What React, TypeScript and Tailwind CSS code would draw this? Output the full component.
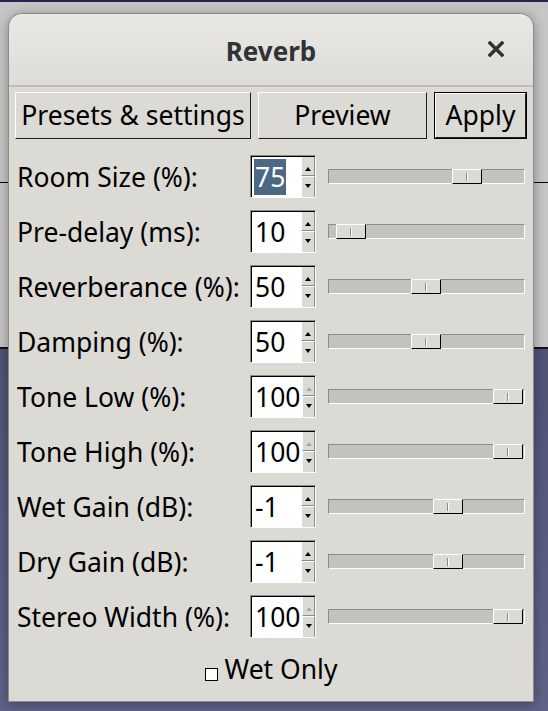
import React from 'react';

interface Param {
  label: string;
  value: number;
  min: number;
  max: number;
  selected?: boolean;
}

const params: Param[] = [
  { label: 'Room Size (%):', value: 75, min: 0, max: 100, selected: true },
  { label: 'Pre-delay (ms):', value: 10, min: 0, max: 200 },
  { label: 'Reverberance (%):', value: 50, min: 0, max: 100 },
  { label: 'Damping (%):', value: 50, min: 0, max: 100 },
  { label: 'Tone Low (%):', value: 100, min: 0, max: 100 },
  { label: 'Tone High (%):', value: 100, min: 0, max: 100 },
  { label: 'Wet Gain (dB):', value: -1, min: -20, max: 10 },
  { label: 'Dry Gain (dB):', value: -1, min: -20, max: 10 },
  { label: 'Stereo Width (%):', value: 100, min: 0, max: 100 },
];

const Arrow: React.FC<{ up?: boolean; disabled?: boolean }> = ({ up, disabled }) => (
  <svg width="6" height="4" viewBox="0 0 6 4" className="block">
    <polygon points={up ? '0,4 3,0 6,4' : '0,0 6,0 3,4'} fill={disabled ? '#a9a7a2' : '#000'} />
  </svg>
);

const SpinBox: React.FC<{ p: Param }> = ({ p }) => (
  <div className="w-[66px] h-[43px] flex border-t border-l border-[#8d8b86] border-b border-r border-b-white border-r-white">
    <div className="flex-1 flex items-center bg-white border-t border-l border-black pl-[2px] pr-[1px] py-[2px]">
      <span
        className={`h-full flex items-center px-[1px] pt-[1px] text-[26.5px] leading-none ${
          p.selected ? 'bg-[#4b6983] text-white' : 'text-black'
        }`}
      >
        {p.value}
      </span>
    </div>
    <div className="w-[14px] flex flex-col bg-[#dcdad5] border-t border-black">
      <div className="flex-1 flex items-end justify-center pb-[4px] border-l border-white border-r border-r-[#8d8b86] border-b border-b-[#8d8b86]">
        <Arrow up disabled={p.value >= p.max} />
      </div>
      <div className="flex-1 flex items-start justify-center pt-[7px] border-l border-white border-r border-r-[#8d8b86] border-t border-t-white">
        <Arrow disabled={p.value <= p.min} />
      </div>
    </div>
  </div>
);

const Slider: React.FC<{ p: Param }> = ({ p }) => {
  const frac = (p.value - p.min) / (p.max - p.min);
  return (
    <div className="relative w-[197px] h-[15px] bg-[#c4c2bc] border-t border-l border-[#8d8b86] border-b border-r border-b-white border-r-white">
      <div
        className="absolute -top-[1px] w-[30px] h-[15px] flex items-center justify-center bg-[#dcdad5] border-t border-l border-white border-b border-r border-b-black border-r-black"
        style={{ left: frac * 165 - 1 }}
      >
        <div className="w-[2px] h-[8px] border-l border-[#8d8b86] border-r border-r-white" />
      </div>
    </div>
  );
};

const bevel =
  'h-[47px] flex items-center justify-center bg-[#dcdad5] text-black text-[26.5px] border-t border-l border-white border-b border-r border-b-[#1e1e1e] border-r-[#1e1e1e]';

export default function App() {
  return (
    <div className="relative w-[548px] h-[711px] overflow-hidden flex flex-col font-['Noto_Sans','DejaVu_Sans',sans-serif]">
      <div className="h-[2px] bg-[#25254f]" />
      <div className="h-[180px] bg-[#c6c6c6]" />
      <div className="h-[1px] bg-black" />
      <div className="h-[164px] bg-[#c6c6c6]" />
      <div className="h-[2px] bg-[#111111]" />
      <div className="flex-1 bg-gradient-to-b from-[#4f5376] to-[#5f6388]" />

      <div className="absolute left-[8px] top-[13px] w-[526px] h-[689px] flex flex-col bg-[#dcdad5] border border-[#8a8a88] rounded-t-[14px] shadow-[0_2px_12px_rgba(0,0,0,0.35)] overflow-hidden">
        <div className="h-[71px] grid grid-cols-[1fr_auto_1fr] items-center bg-gradient-to-b from-[#e9e8e5] to-[#dedcd8] rounded-t-[13px]">
          <div />
          <span className="text-[26px] font-bold text-[#2e3436] pt-[3px]">Reverb</span>
          <div className="justify-self-end mr-[29px] flex">
            <svg width="16" height="17" viewBox="0 0 16 17">
              <path d="M2 2 L14 14 M14 2 L2 14" stroke="#2e3436" strokeWidth="3.4" strokeLinecap="square" />
            </svg>
          </div>
        </div>
        <div className="h-[2px] bg-[#c3bcb4]" />

        <div className="flex gap-[7px] px-[6px] mt-[5px]">
          <div className={`w-[236px] ${bevel}`}>Presets &amp; settings</div>
          <div className={`w-[169px] ${bevel}`}>Preview</div>
          <div className="w-[93px] border border-black flex">
            <div className={`flex-1 !h-[45px] ${bevel}`}>Apply</div>
          </div>
        </div>

        <div className="flex flex-col gap-[12px] pl-[8px] mt-[16px]">
          {params.map((p) => (
            <div key={p.label} className="flex items-center h-[43px]">
              <span className="w-[233px] pt-[2px] text-[26.5px] text-black whitespace-nowrap">{p.label}</span>
              <SpinBox p={p} />
              <div className="ml-[12px]">
                <Slider p={p} />
              </div>
            </div>
          ))}
        </div>

        <div className="flex justify-center items-start mt-[13px] h-[36px]">
          <div className="w-[13px] h-[13px] mt-[17px] mr-[7px] bg-white border border-black" />
          <span className="text-[26.5px] leading-[36px] text-black">Wet Only</span>
        </div>
      </div>
    </div>
  );
}
